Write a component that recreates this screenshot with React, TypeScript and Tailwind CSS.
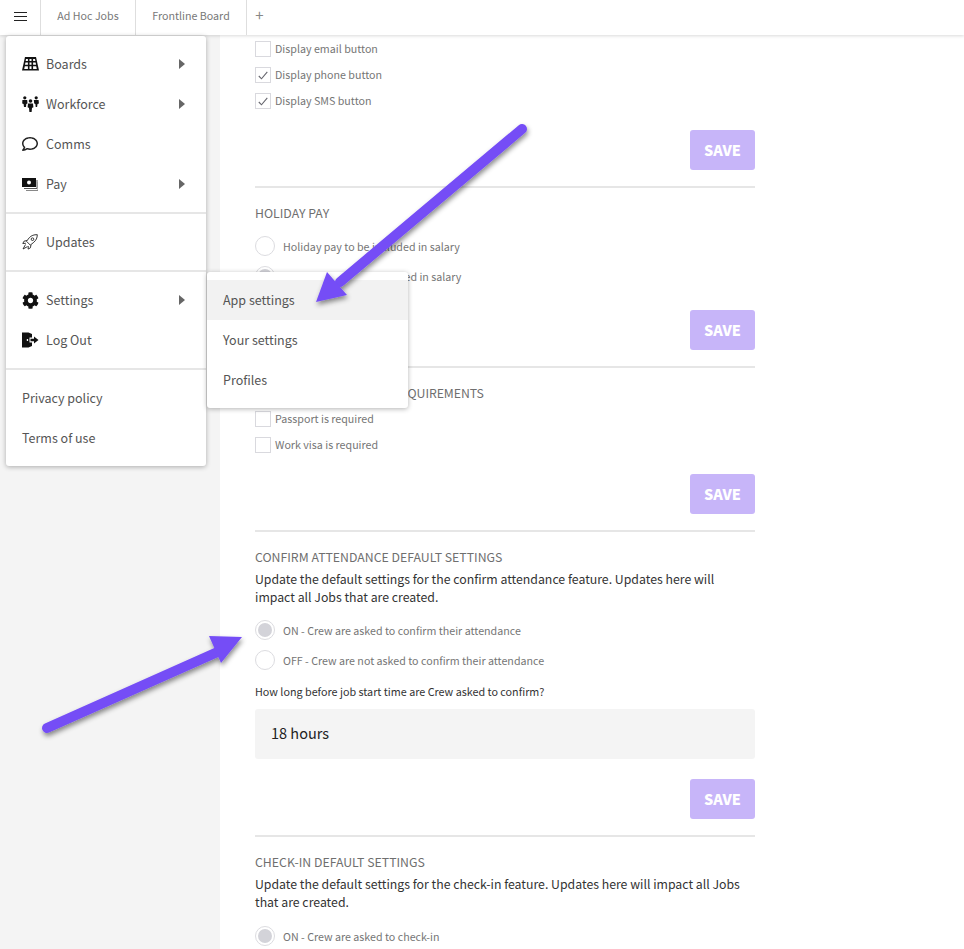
import React from "react";
import { FaCog, FaRegComment } from "react-icons/fa";

const FONT = `font-["Noto_Sans_CJK_SC","Noto_Sans",sans-serif]`;

function BoardsIcon() {
  return (
    <svg width="17" height="14" viewBox="0 0 17 14" fill="#111">
      <path d="M3 0h11l3 13.500H0z" />
      <path d="M4 2h1.900v2H3.700zM7.500 2h2v2h-2zM11.100 2h1.900l.4 2h-2.300zM3.400 5.500h2.500v2.300H3zM7.500 5.500h2v2.300h-2zM11.100 5.500h2.500l.5 2.300h-3zM2.800 9.300h3.100v2.700H2.200zM7.500 9.300h2v2.700h-2zM11.100 9.300h3.100l.6 2.700h-3.700z" fill="#fff" />
    </svg>
  );
}
function WorkforceIcon() {
  return (
    <svg width="17" height="16" viewBox="0 0 17 16" fill="#111">
      <circle cx="2.800" cy="1.800" r="1.600" />
      <path d="M.4 4h4.800l.3 3.400-1.200.6-.3 3H2l-.4-3L.2 7.400z" />
      <circle cx="14.200" cy="1.800" r="1.600" />
      <path d="M11.800 4h4.800l.3 3.400-1.400.6-.4 3h-1.400l-.3-3-1.200-.6z" />
      <circle cx="8.500" cy="5" r="1.800" />
      <path d="M6 7.400h5l.4 3.800-1.400.7-.4 4H7.400l-.4-4-1.400-.7z" />
    </svg>
  );
}
function PayIcon() {
  return (
    <svg width="16" height="14" viewBox="0 0 16 14">
      <rect x="0" y="1" width="14" height="9" fill="#111" />
      <circle cx="7" cy="5.500" r="2" fill="#fff" />
      <path d="M15 3v8.500H2" fill="none" stroke="#555" strokeWidth="1" />
      <path d="M16 5v8.500H4" fill="none" stroke="#888" strokeWidth="1" />
    </svg>
  );
}
function RocketIcon() {
  return (
    <svg width="16" height="16" viewBox="0 0 16 16" fill="none" stroke="#222" strokeWidth="0.9" strokeLinejoin="round">
      <path d="M15.300.7c-3.200-.2-6 .8-8 3L4.500 7.300l3.800 3.800 3.500-2.800c2.200-2 3.500-4.400 3.500-7.600z" />
      <circle cx="10.500" cy="5.200" r="1.300" />
      <path d="M5 6.500 2 7.200.8 9.500l3-.2M9 10.800l-.6 3-2.300 1.300.2-3" />
      <path d="M3.500 10.500 1 15l4.500-2.400" />
    </svg>
  );
}
function LogoutIcon() {
  return (
    <svg width="17" height="16" viewBox="0 0 17 16" fill="#111">
      <path d="M0 .5h6.500L10 2v3.500H7.500v5H10v3.500l-3.500 1.500H0z" />
      <rect x="4.800" y="7" width="1.300" height="2" fill="#fff" />
      <path d="M8.500 6.800h3.500V4.500L16.500 8 12 11.500V9.200H8.500z" />
    </svg>
  );
}

function Caret() {
  return <span className="h-0 w-0 border-y-[5px] border-l-[6px] border-y-transparent border-l-[#666]" />;
}

function MenuItem({ icon, label, caret }: { icon?: React.ReactNode; label: string; caret?: boolean }) {
  return (
    <div className="flex h-10 items-center pl-4 pr-[21px] text-[12.500px] text-[#555]">
      {icon && <span className="flex w-6 shrink-0 items-center">{icon}</span>}
      <span className="flex-1">{label}</span>
      {caret && <Caret />}
    </div>
  );
}

function Check({ label, checked }: { label: string; checked?: boolean }) {
  return (
    <div className="flex h-[26px] items-center gap-1 text-[10.700px] text-[#757575]">
      <span className="flex h-4 w-4 items-center justify-center border border-[#d9d9de] bg-white">
        {checked && (
          <svg width="10" height="9" viewBox="0 0 10 9" fill="none" stroke="#66666e" strokeWidth="1.100">
            <path d="M.8 5l2.700 2.800L9.300.8" />
          </svg>
        )}
      </span>
      {label}
    </div>
  );
}

function Radio({ label, on }: { label: string; on?: boolean }) {
  return (
    <div className="flex h-[30px] items-center gap-2 text-[10.700px] text-[#757575]">
      <span className="flex h-5 w-5 items-center justify-center rounded-full border border-[#dcdce0] bg-white">
        {on && <span className="h-[14px] w-[14px] rounded-full bg-[#d3d3d9]" />}
      </span>
      <span className="pt-[2px]">{label}</span>
    </div>
  );
}

function Save() {
  return (
    <div className="flex justify-end">
      <button className="h-10 w-[65px] rounded-[3px] bg-[#c7b5f9] text-[14.500px] font-black text-white">SAVE</button>
    </div>
  );
}

function Rule() {
  return <div className="h-0.5 bg-[#e6e6e6]" />;
}

function Heading({ children }: { children: React.ReactNode }) {
  return <div className="flex h-[18px] items-center text-[12.300px] text-[#6f6f6f]">{children}</div>;
}

function Para({ children }: { children: React.ReactNode }) {
  return <p className="text-[12.300px] leading-[18.400px] text-[#333]">{children}</p>;
}

function Arrow({ className, x1, y1, x2, y2, tip }: { className: string; x1: number; y1: number; x2: number; y2: number; tip: string }) {
  return (
    <svg className={className} width="964" height="949" viewBox="0 0 964 949" fill="none">
      <defs>
        <filter id="arrowShadow" x="-20%" y="-20%" width="150%" height="150%">
          <feDropShadow dx="1" dy="3" stdDeviation="2.500" floodColor="#000" floodOpacity="0.45" />
        </filter>
      </defs>
      <g filter="url(#arrowShadow)">
        <line x1={x1} y1={y1} x2={x2} y2={y2} stroke="#744ef6" strokeWidth="10" strokeLinecap="round" />
        <polygon points={tip} fill="#744ef6" />
      </g>
    </svg>
  );
}

export default function App() {
  return (
    <div className={`${FONT} relative h-[949px] w-[964px] overflow-hidden bg-white`}>
      <header className="relative z-10 flex h-[35px] bg-white shadow-[0_1px_3px_rgba(0,0,0,0.15)]">
        <div className="flex w-[41px] items-center justify-center border-r border-[#dedede] pb-0.5">
          <div className="flex w-[13px] flex-col gap-[3px]">
            <span className="h-px bg-[#222]" />
            <span className="h-px bg-[#222]" />
            <span className="h-px bg-[#222]" />
          </div>
        </div>
        <div className="flex w-[95px] items-center justify-center border-r border-[#dedede] pb-0.5 text-[10.700px] text-[#777]">Ad Hoc Jobs</div>
        <div className="flex w-[111px] items-center justify-center border-r border-[#dedede] pb-0.5 text-[10.700px] text-[#777]">Frontline Board</div>
        <div className="flex w-[25px] items-center justify-center pb-1 text-[15px] text-[#888]">+</div>
      </header>

      <div className="flex h-[914px]">
        <aside className="w-[220px] shrink-0 bg-[#f4f4f4]" />
        <main className="box-content w-[500px] pl-[35px]">
          <div className="pt-[1px]">
            <Check label="Display email button" />
            <Check label="Display phone button" checked />
            <Check label="Display SMS button" checked />
          </div>
          <div className="pt-4"><Save /></div>
          <div className="pt-4"><Rule /></div>
          <div className="pt-[16px]"><Heading>HOLIDAY PAY</Heading></div>
          <div className="pt-[9px]">
            <Radio label="Holiday pay to be included in salary" />
            <Radio label="Holiday pay to be excluded in salary" on />
          </div>
          <div className="pt-[19px]"><Save /></div>
          <div className="pt-4"><Rule /></div>
          <div className="pt-4"><Heading><span className="whitespace-nowrap tracking-[-0.06px]">RIGHT TO WORK CHECK REQUIREMENTS</span></Heading></div>
          <div className="pt-[4px]">
            <Check label="Passport is required" />
            <Check label="Work visa is required" />
          </div>
          <div className="pt-4"><Save /></div>
          <div className="pt-4"><Rule /></div>
          <div className="pt-4"><Heading>CONFIRM ATTENDANCE DEFAULT SETTINGS</Heading></div>
          <div className="pt-[4px]">
            <Para>Update the default settings for the confirm attendance feature. Updates here will impact all Jobs that are created.</Para>
          </div>
          <div className="pt-[8px]">
            <Radio label="ON - Crew are asked to confirm their attendance" on />
            <Radio label="OFF - Crew are not asked to confirm their attendance" />
          </div>
          <div className="pt-[8px] text-[10.780px] leading-[16px] text-[#333]">How long before job start time are Crew asked to confirm?</div>
          <div className="pt-[10px]">
            <div className="flex h-[50px] items-center rounded-[3px] bg-[#f4f4f4] px-4 pb-0.5 text-[14.500px] text-[#222]">18 hours</div>
          </div>
          <div className="pt-5"><Save /></div>
          <div className="pt-4"><Rule /></div>
          <div className="pt-4"><Heading>CHECK-IN DEFAULT SETTINGS</Heading></div>
          <div className="pt-[4px]">
            <Para>Update the default settings for the check-in feature. Updates here will impact all Jobs that are created.</Para>
          </div>
          <div className="pt-[9px]">
            <Radio label="ON - Crew are asked to check-in" on />
          </div>
        </main>
      </div>

      <nav className="absolute left-[6px] top-9 z-20 w-[200px] rounded-[3px] bg-white shadow-[0_1px_5px_rgba(0,0,0,0.3)]">
        <div className="py-2">
          <MenuItem icon={<BoardsIcon />} label="Boards" caret />
          <MenuItem icon={<WorkforceIcon />} label="Workforce" caret />
          <MenuItem icon={<FaRegComment size={16} color="#222" />} label="Comms" />
          <MenuItem icon={<PayIcon />} label="Pay" caret />
        </div>
        <Rule />
        <div className="py-2">
          <MenuItem icon={<RocketIcon />} label="Updates" />
        </div>
        <Rule />
        <div className="py-2">
          <MenuItem icon={<FaCog size={17} color="#111" />} label="Settings" caret />
          <MenuItem icon={<LogoutIcon />} label="Log Out" />
        </div>
        <Rule />
        <div className="py-2">
          <MenuItem label="Privacy policy" />
          <MenuItem label="Terms of use" />
        </div>
      </nav>

      <div className="absolute left-[207px] top-[272px] z-20 w-[201px] rounded-[3px] bg-white py-2 text-[12.500px] text-[#555] shadow-[0_1px_5px_rgba(0,0,0,0.3)]">
        <div className="flex h-10 items-center bg-[#f2f2f2] pl-4">App settings</div>
        <div className="flex h-10 items-center pl-4">Your settings</div>
        <div className="flex h-10 items-center pl-4">Profiles</div>
      </div>

      <Arrow className="pointer-events-none absolute left-0 top-0 z-30" x1={522} y1={129} x2={340} y2={282} tip="327,272 347,295 316,302" />
      <Arrow className="pointer-events-none absolute left-0 top-0 z-30" x1={47} y1={728} x2={222} y2={650} tip="209,636 242,637 221,663" />
    </div>
  );
}
